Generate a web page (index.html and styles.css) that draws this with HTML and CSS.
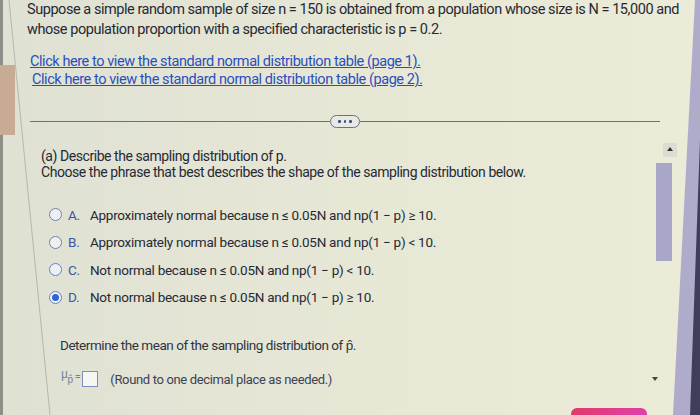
FILE: index.html
```html
<!DOCTYPE html>
<html>
<head>
<meta charset="utf-8">
<link rel="stylesheet" href="styles.css">
</head>
<body>
<div class="screen">
  <div class="bezel-left"><div class="tan"></div></div>
  <main class="content">
    <p class="intro">Suppose a simple random sample of size n = 150 is obtained from a population whose size is N = 15,000 and<br>whose population proportion with a specified characteristic is p = 0.2.</p>
    <div class="links">
      <a class="link">Click here to view the standard normal distribution table (page 1).</a>
      <a class="link link2">Click here to view the standard normal distribution table (page 2).</a>
    </div>
    <div class="separator">
      <span class="rule"></span>
      <span class="pill"><i></i><i></i><i></i></span>
      <span class="rule"></span>
    </div>
    <div class="part">
      <p class="q1">(a) Describe the sampling distribution of p.</p>
      <p class="q2">Choose the phrase that best describes the shape of the sampling distribution below.</p>
    </div>
    <ul class="options">
      <li class="opt"><span class="radio"></span><span class="letter">A.</span><span>Approximately normal because n ≤ 0.05N and np(1 − p) ≥ 10.</span></li>
      <li class="opt"><span class="radio"></span><span class="letter">B.</span><span>Approximately normal because n ≤ 0.05N and np(1 − p) &lt; 10.</span></li>
      <li class="opt"><span class="radio"></span><span class="letter">C.</span><span>Not normal because n ≤ 0.05N and np(1 − p) &lt; 10.</span></li>
      <li class="opt"><span class="radio checked"></span><span class="letter">D.</span><span>Not normal because n ≤ 0.05N and np(1 − p) ≥ 10.</span></li>
    </ul>
    <p class="det">Determine the mean of the sampling distribution of <span class="phat">p&#770;</span>.</p>
    <div class="answer">
      <span class="mu">μ<span class="sub">p&#770;</span></span>
      <span class="eq">=</span>
      <span class="box"></span>
      <span class="round">(Round to one decimal place as needed.)</span>
    </div>
  </main>
  <div class="scroll">
    <div class="up"></div>
    <div class="thumb"></div>
    <div class="track"></div>
    <div class="down"></div>
  </div>
  <div class="bezel-right">
    <svg class="bezel-svg" width="20" height="415" viewBox="0 0 20 415">
      <polygon points="15,0 20,0 20,415 -7,415" fill="#aeacca"/>
      <polygon points="20,140 20,415 10,415" fill="#3f3d5a"/>
    </svg>
  </div>
</div>
<svg class="glare" width="700" height="415" viewBox="0 0 700 415">
  <line x1="9" y1="0" x2="50" y2="415" stroke="#b4b8ad" stroke-width="1"/>
</svg>
<div class="pink"></div>
</body>
</html>
```
FILE: styles.css
```css
html, body {
  margin: 0;
  padding: 0;
}
body {
  width: 700px;
  height: 415px;
  overflow: hidden;
  position: relative;
  font-family: Roboto, "Liberation Sans", Arial, sans-serif;
  color: #262935;
  background: linear-gradient(to right, #dfe1d3, #e8e8d6 60%, #ecebd8);
}
.screen {
  display: flex;
  height: 415px;
}
.bezel-left {
  width: 3px;
  flex: none;
  background: #8b9186;
  position: relative;
}
.tan {
  position: absolute;
  left: 0;
  top: 65px;
  width: 15px;
  height: 70px;
  background: #c7ab93;
}
.content {
  width: 623px;
  flex: none;
  padding-left: 24px;
  white-space: nowrap;
}
p { margin: 0; }
.intro {
  font-size: 14.5px;
  line-height: 20px;
  letter-spacing: -0.45px;
}
.links {
  margin-top: 13px;
  display: flex;
  flex-direction: column;
  align-items: flex-start;
  padding-left: 3px;
}
.link {
  color: #2a4fbd;
  text-decoration: underline;
  font-size: 14.5px;
  line-height: 18px;
  letter-spacing: -0.43px;
}
.link2 { padding-left: 2px; }
.separator {
  margin-top: 26px;
  display: flex;
  align-items: center;
  width: 630px;
  margin-left: 3px;
}
.rule {
  flex: 1;
  height: 1px;
  background: #6c707a;
}
.pill {
  width: 28px;
  height: 11px;
  border: 1.5px solid #6a7184;
  border-radius: 7px;
  display: flex;
  justify-content: center;
  align-items: center;
  gap: 3px;
  background: #e8e9e4;
}
.pill i {
  width: 2.5px;
  height: 2.5px;
  border-radius: 50%;
  background: #3e4f7c;
}
.part {
  margin-top: 20px;
  padding-left: 14px;
  font-size: 14px;
  letter-spacing: -0.44px;
  line-height: 16px;
}
.options {
  list-style: none;
  margin: 21px 0 0 0;
  padding: 0 0 0 22px;
  font-size: 13.5px;
  letter-spacing: -0.27px;
}
.opt {
  display: flex;
  align-items: center;
  height: 27.5px;
}
.radio {
  width: 11px;
  height: 11px;
  border: 1.5px solid #6c80b8;
  border-radius: 50%;
  background: #eef0f2;
  margin-right: 6px;
  display: flex;
  align-items: center;
  justify-content: center;
}
.radio.checked::after {
  content: "";
  width: 7px;
  height: 7px;
  border-radius: 50%;
  background: #2f63d1;
}
.letter {
  color: #3c56a6;
  width: 22px;
}
.det {
  margin-top: 26px;
  padding-left: 33px;
  font-size: 13.5px;
  letter-spacing: -0.45px;
  color: #30333f;
}
.answer {
  margin-top: 17px;
  padding-left: 34px;
  display: flex;
  align-items: center;
  font-size: 13px;
  letter-spacing: -0.35px;
  color: #3d4256;
}
.mu {
  display: inline-flex;
  align-items: flex-start;
  font-size: 12px;
  line-height: 14px;
  color: #7480a3;
  position: relative;
  top: -3px;
}
.sub {
  font-size: 10px;
  line-height: 10px;
  margin-top: 8px;
}
.eq {
  color: #7480a3;
  font-size: 11px;
  margin: 0 2px 0 2px;
  position: relative;
  top: -3px;
}
.box {
  width: 14px;
  height: 14px;
  border: 1.5px solid #7d8fba;
  background: #f6f6f2;
  margin-right: 12px;
}
.scroll {
  width: 30px;
  flex: none;
  display: flex;
  flex-direction: column;
  align-items: flex-start;
  padding-top: 143px;
}
.up {
  width: 14px;
  height: 14px;
  background: #dcdcd3;
  position: relative;
  margin-left: 13px;
}
.up::after {
  content: "";
  position: absolute;
  left: 4px;
  top: 4px;
  border-left: 3px solid transparent;
  border-right: 3px solid transparent;
  border-bottom: 4px solid #333;
}
.thumb {
  width: 16px;
  height: 98px;
  margin-top: 6px;
  margin-left: 6px;
  background: #a9a7c9;
}
.track { height: 116px; }
.down {
  width: 0;
  height: 0;
  margin-left: 2px;
  border-left: 3px solid transparent;
  border-right: 3px solid transparent;
  border-top: 4px solid #444;
}
.bezel-right {
  flex: 1;
  position: relative;
}
.bezel-svg {
  display: block;
  overflow: visible;
}
.glare {
  position: absolute;
  left: 0;
  top: 0;
  pointer-events: none;
}
.pink {
  position: absolute;
  left: 571px;
  top: 408px;
  width: 76px;
  height: 14px;
  border-radius: 6px 6px 0 0;
  background: linear-gradient(to right, #e23a6a, #e040a8);
}
```
